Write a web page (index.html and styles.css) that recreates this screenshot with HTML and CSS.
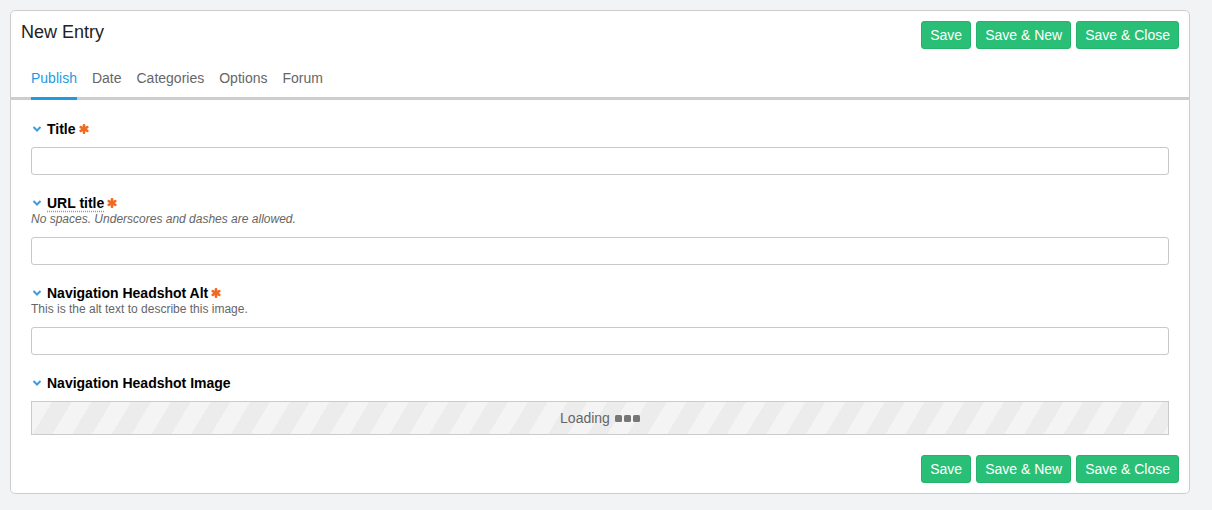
FILE: index.html
```html
<!DOCTYPE html>
<html lang="en">
<head>
    <meta charset="UTF-8">
    <title>New Entry</title>
    <link rel="stylesheet" href="styles.css">
</head>
<body>
    <div class="panel">
        <!-- Header -->
        <div class="panel-head">
            <h1 class="panel-title">New Entry</h1>
            <div class="actions">
                <button class="btn">Save</button>
                <button class="btn">Save &amp; New</button>
                <button class="btn">Save &amp; Close</button>
            </div>
        </div>

        <!-- Tabs -->
        <ul class="tabs">
            <li class="tab active">Publish</li>
            <li class="tab">Date</li>
            <li class="tab">Categories</li>
            <li class="tab">Options</li>
            <li class="tab">Forum</li>
        </ul>

        <!-- Fields -->
        <div class="panel-body">
            <div class="field">
                <label class="field-label">
                    <svg class="caret" viewBox="0 0 10 8" width="10" height="8"><path d="M1.5 2 L5 5.5 L8.5 2" fill="none" stroke="#3d9be0" stroke-width="2"/></svg>
                    <span>Title</span>
                    <svg class="req" viewBox="0 0 10 10" width="10" height="10"><g stroke="#f26a22" stroke-width="2.6" stroke-linecap="round"><path d="M5 1.2 V8.8"/><path d="M1.7 3.1 L8.3 6.9"/><path d="M1.7 6.9 L8.3 3.1"/></g></svg>
                </label>
                <input class="text-input" type="text">
            </div>

            <div class="field">
                <label class="field-label">
                    <svg class="caret" viewBox="0 0 10 8" width="10" height="8"><path d="M1.5 2 L5 5.5 L8.5 2" fill="none" stroke="#3d9be0" stroke-width="2"/></svg>
                    <span class="dotted">URL title</span>
                    <svg class="req" viewBox="0 0 10 10" width="10" height="10"><g stroke="#f26a22" stroke-width="2.6" stroke-linecap="round"><path d="M5 1.2 V8.8"/><path d="M1.7 3.1 L8.3 6.9"/><path d="M1.7 6.9 L8.3 3.1"/></g></svg>
                </label>
                <div class="hint italic">No spaces. Underscores and dashes are allowed.</div>
                <input class="text-input" type="text">
            </div>

            <div class="field">
                <label class="field-label">
                    <svg class="caret" viewBox="0 0 10 8" width="10" height="8"><path d="M1.5 2 L5 5.5 L8.5 2" fill="none" stroke="#3d9be0" stroke-width="2"/></svg>
                    <span>Navigation Headshot Alt</span>
                    <svg class="req" viewBox="0 0 10 10" width="10" height="10"><g stroke="#f26a22" stroke-width="2.6" stroke-linecap="round"><path d="M5 1.2 V8.8"/><path d="M1.7 3.1 L8.3 6.9"/><path d="M1.7 6.9 L8.3 3.1"/></g></svg>
                </label>
                <div class="hint">This is the alt text to describe this image.</div>
                <input class="text-input" type="text">
            </div>

            <div class="field">
                <label class="field-label">
                    <svg class="caret" viewBox="0 0 10 8" width="10" height="8"><path d="M1.5 2 L5 5.5 L8.5 2" fill="none" stroke="#3d9be0" stroke-width="2"/></svg>
                    <span>Navigation Headshot Image</span>
                </label>
                <div class="loading">
                    Loading
                    <span class="dots"><i></i><i></i><i></i></span>
                </div>
            </div>
        </div>

        <!-- Footer -->
        <div class="panel-foot">
            <div class="actions">
                <button class="btn">Save</button>
                <button class="btn">Save &amp; New</button>
                <button class="btn">Save &amp; Close</button>
            </div>
        </div>
    </div>
</body>
</html>
```

FILE: styles.css
```css
body { margin: 10px; background: #f2f3f5; font-family: "Liberation Sans", Arial, sans-serif; font-size: 14px; color: #000; }

.panel { width: 1178px; height: 482px; background: #fff; border: 1px solid #cdcdcd; border-radius: 5px; display: flex; flex-direction: column; }
.panel-head { display: flex; justify-content: space-between; padding: 10px 10px 0; }
.panel-title { margin: 0; font-size: 18px; font-weight: normal; line-height: 22px; color: #222; }

.actions { display: flex; gap: 5px; }
.btn { height: 28px; padding: 0 8px; background: #29bf76; color: #fff; border: 1px solid #25b26d; border-radius: 3px; font-family: inherit; font-size: 14px; line-height: 26px; }

.tabs { list-style: none; margin: 8px 0 0; padding: 0 20px; display: flex; gap: 15px; border-bottom: 3px solid #cdcdcd; }
.tab { padding: 11px 0 9px; line-height: 20px; color: #666; border-bottom: 3px solid transparent; margin-bottom: -3px; }
.tab.active { color: #1e9be1; border-bottom-color: #1e9be1; }

.panel-body { padding: 19px 20px 0; flex: 1; }
.field { display: flex; flex-direction: column; margin-bottom: 18px; }
.field-label { display: flex; align-items: center; height: 20px; font-weight: bold; line-height: 20px; color: #000; }
.caret { margin: 0 5px 0 1px; }
.req { margin-left: 3px; }
.dotted { text-decoration: underline dotted #999; text-underline-offset: 3px; }
.hint { font-size: 12px; line-height: 16px; margin: -2px 0 2px; color: #666; }
.hint.italic { font-style: italic; }

.text-input { display: block; box-sizing: border-box; width: 100%; height: 28px; margin-top: 8px; border: 1px solid #c8c8c8; border-radius: 3px; background: #fff; }

.loading { box-sizing: border-box; height: 34px; margin-top: 8px; border: 1px solid #cbcbcb; display: flex; align-items: center; justify-content: center; gap: 5px; color: #666; font-size: 14px;
    background: repeating-linear-gradient(121deg, #f4f4f4 0 17px, #ececec 17px 34px); }
.dots { display: flex; gap: 2px; }
.dots i { width: 7px; height: 7px; border-radius: 1.5px; background: #777; }

.panel-foot { display: flex; justify-content: flex-end; padding: 0 10px 10px; }
```
